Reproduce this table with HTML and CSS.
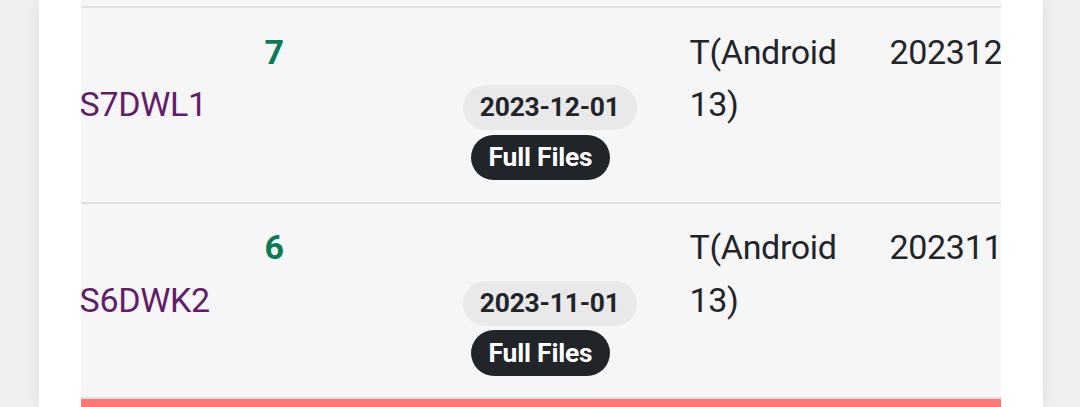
FILE: index.html
```html
<!DOCTYPE html>
<html lang="en">
<head>
<meta charset="utf-8">
<title>Firmware list</title>
<link rel="stylesheet" href="styles.css">
</head>
<body>
<main class="card">
  <div class="scroller">
    <table class="fw-table">
      <colgroup>
        <col class="c-name"><col class="c-ver"><col class="c-date"><col class="c-os"><col class="c-build">
      </colgroup>
      <tbody>
        <tr>
          <td class="name"><br><span>S7DWL1</span></td>
          <td class="ver">7</td>
          <td class="dates"><br><span class="badge light">2023-12-01</span><br><span class="badge dark">Full Files</span></td>
          <td>T(Android 13)</td>
          <td>202312</td>
        </tr>
        <tr>
          <td class="name"><br><span>S6DWK2</span></td>
          <td class="ver">6</td>
          <td class="dates"><br><span class="badge light">2023-11-01</span><br><span class="badge dark">Full Files</span></td>
          <td>T(Android 13)</td>
          <td>202311</td>
        </tr>
        <tr class="danger">
          <td></td><td></td><td></td><td></td><td></td>
        </tr>
      </tbody>
    </table>
  </div>
</main>
</body>
</html>
```
FILE: styles.css
```css
html, body {
  margin: 0;
  padding: 0;
  height: 407px;
  overflow: hidden;
}
body {
  background: #f0f0f0;
  font-family: Roboto, "Noto Sans", sans-serif;
  color: #212529;
}
.card {
  width: 920px;
  height: 407px;
  margin-left: 39px;
  padding: 0 42px;
  background: #ffffff;
  box-shadow: 0 0 16px rgba(0, 0, 0, 0.09);
}
.scroller {
  width: 920px;
  overflow: hidden;
  padding-top: 6px;
  background: #f6f6f6;
}
.fw-table {
  border-collapse: collapse;
  table-layout: fixed;
  width: 1060px;
  margin-left: -20px;
  font-size: 34px;
  letter-spacing: -0.35px;
  line-height: 52.8px;
  border-top: 2px solid #dee2e6;
}
.c-name { width: 186px; }
.c-ver { width: 198px; }
.c-date { width: 227px; }
.c-os { width: 200px; }
.c-build { width: 249px; }
.fw-table td {
  padding: 17.6px;
  vertical-align: top;
  border-bottom: 2px solid #dee2e6;
  background: #f6f6f6;
}
.fw-table td.name {
  color: #611d6b;
  padding-left: 18.6px;
}
.fw-table td.ver {
  color: #077c57;
  font-weight: 700;
}
.badge {
  display: inline-block;
  font-size: 26.4px;
  font-weight: 700;
  line-height: 1;
  letter-spacing: -0.2px;
  padding: 9.2px 17.2px;
  border-radius: 23px;
  white-space: nowrap;
}
.badge.light {
  background: #e9e9e9;
  color: #212529;
}
.badge.dark {
  background: #212529;
  color: #ffffff;
  margin-left: 8px;
  padding: 9.6px 18px;
  vertical-align: 3px;
}
.fw-table tr.danger td {
  background: #ff7676;
  height: 60px;
  border-bottom: 0;
}
```
